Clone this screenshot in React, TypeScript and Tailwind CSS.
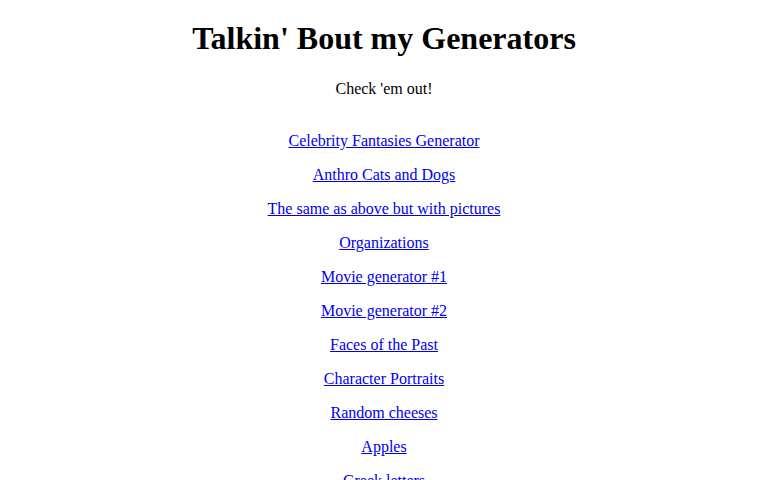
import React from "react";

const generators = [
  "Celebrity Fantasies Generator",
  "Anthro Cats and Dogs",
  "The same as above but with pictures",
  "Organizations",
  "Movie generator #1",
  "Movie generator #2",
  "Faces of the Past",
  "Character Portraits",
  "Random cheeses",
  "Apples",
  "Greek letters",
  "Colors",
];

export default function App() {
  return (
    <div className="min-h-screen bg-white text-center text-black font-['Liberation_Serif',serif]">
      <h1 className="mt-[19.5px] mb-[23.4px] text-[32px] font-bold leading-[37px]">Talkin' Bout my Generators</h1>
      <p className="my-4 text-base leading-[18px]">Check 'em out!</p>
      {/* list of generator links */}
      <div className="pt-[2px]">
        {generators.map((name) => (
          <p key={name} className="my-4 text-base leading-[18px]">
            <a href="#" className="text-[#0000ee] underline">
              {name}
            </a>
          </p>
        ))}
      </div>
    </div>
  );
}
